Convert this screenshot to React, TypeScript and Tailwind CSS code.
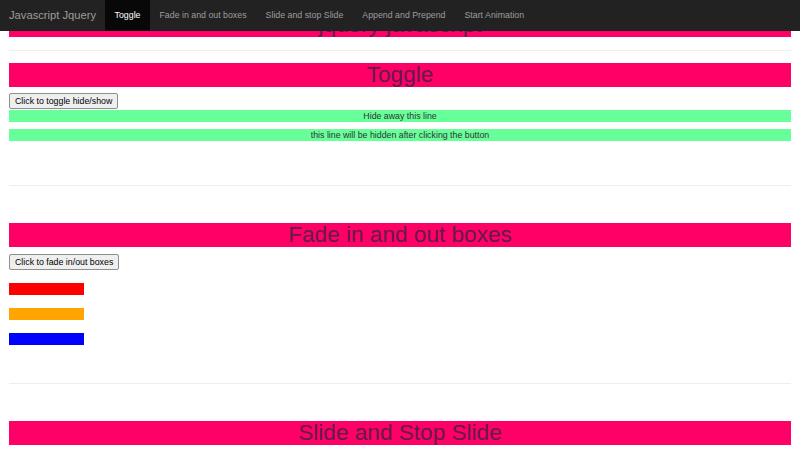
const navLinks = [
  { label: 'Toggle', active: true },
  { label: 'Fade in and out boxes' },
  { label: 'Slide and stop Slide' },
  { label: 'Append and Prepend' },
  { label: 'Start Animation' },
]

function Heading({ children }: { children: React.ReactNode }) {
  return (
    <h1 className="bg-[#ff0066] text-center text-[22.6px] leading-[24px] h-[24px] text-[#641b4b] font-normal">
      {children}
    </h1>
  )
}

function Btn({ children }: { children: React.ReactNode }) {
  return (
    <div className="flex">
      <button className="h-[16px] px-[5px] border border-[#8f8f8f] rounded-[2px] bg-[#efefef] text-[8.8px] leading-[14px] text-black">
        {children}
      </button>
    </div>
  )
}

function Rule() {
  return <hr className="border-0 border-t border-[#eeeeee]" />
}

export default function App() {
  return (
    <div
      className="relative w-[800px] h-[450px] overflow-hidden bg-white"
      style={{ fontFamily: '"Liberation Sans", Arial, sans-serif' }}
    >
      <nav className="absolute top-0 left-0 right-0 z-10 h-[31px] bg-[#222222] flex items-stretch">
        <span className="px-[9px] flex items-center text-[11.2px] text-[#9d9d9d]">Javascript Jquery</span>
        {navLinks.map(link => (
          <a
            key={link.label}
            className={
              link.active
                ? 'px-[9.5px] flex items-center text-[8.8px] text-white bg-[#080808]'
                : 'px-[9.5px] flex items-center text-[8.8px] text-[#9d9d9d]'
            }
          >
            {link.label}
          </a>
        ))}
      </nav>

      <div className="px-[9px]">
        {/* page title, mostly under the fixed navbar */}
        <div className="pt-[13px]">
          <Heading>jquery javascript</Heading>
        </div>
        <div className="mt-[13px]">
          <Rule />
        </div>

        {/* Toggle */}
        <div className="mt-[12px]">
          <Heading>Toggle</Heading>
          <div className="mt-[6px]">
            <Btn>Click to toggle hide/show</Btn>
          </div>
          <p className="mt-[1px] h-[12px] bg-[#66ff99] text-center text-[8.8px] leading-[12px] text-[#333]">Hide away this line</p>
          <p className="mt-[7px] h-[12px] bg-[#66ff99] text-center text-[8.8px] leading-[12px] text-[#333]">
            this line will be hidden after clicking the button
          </p>
        </div>
        <div className="mt-[44px]">
          <Rule />
        </div>

        {/* Fade */}
        <div className="mt-[37px]">
          <Heading>Fade in and out boxes</Heading>
          <div className="mt-[7px]">
            <Btn>Click to fade in/out boxes</Btn>
          </div>
          <div className="mt-[13px] flex flex-col gap-[13px]">
            <div className="w-[75px] h-[12px] bg-[#ff0000]" />
            <div className="w-[75px] h-[12px] bg-[#ffa500]" />
            <div className="w-[75px] h-[12px] bg-[#0000ff]" />
          </div>
        </div>
        <div className="mt-[38px]">
          <Rule />
        </div>

        {/* Slide */}
        <div className="mt-[37px]">
          <Heading>Slide and Stop Slide</Heading>
        </div>
      </div>
    </div>
  )
}
